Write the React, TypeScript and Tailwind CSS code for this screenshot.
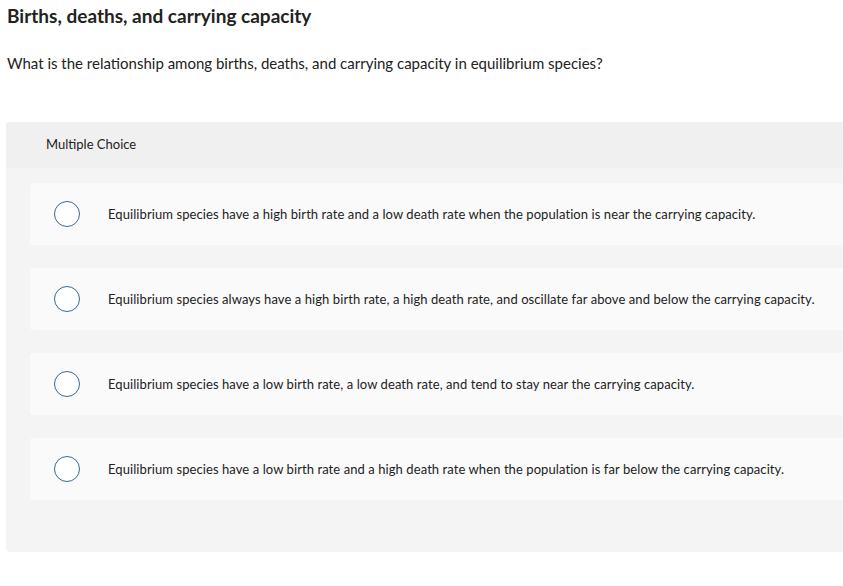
import React from 'react'

const options = [
  'Equilibrium species have a high birth rate and a low death rate when the population is near the carrying capacity.',
  'Equilibrium species always have a high birth rate, a high death rate, and oscillate far above and below the carrying capacity.',
  'Equilibrium species have a low birth rate, a low death rate, and tend to stay near the carrying capacity.',
  'Equilibrium species have a low birth rate and a high death rate when the population is far below the carrying capacity.',
]

const App = () => {
  return (
    <div className="w-[843px] h-[586px] overflow-hidden bg-white text-[#222] font-['Lato',sans-serif]">
      <h1 className="pl-[7px] pt-[4px] text-[19px] font-bold leading-[24px]">
        Births, deaths, and carrying capacity
      </h1>
      <p className="pl-[7px] mt-[25px] text-[15px] leading-[20px]">
        What is the relationship among births, deaths, and carrying capacity in equilibrium species?
      </p>

      {/* Question panel */}
      <div className="ml-[6px] mt-[49px] w-[850px] bg-[#f4f4f4] rounded-[4px] pb-[52px]">
        <div className="h-[46px] bg-[#f0f0f0] rounded-t-[4px] pl-[40px] flex items-center text-[13px]">
          Multiple Choice
        </div>
        <div className="pl-[24px] pt-[15px] flex flex-col gap-[23px]">
          {options.map((text) => (
            <div
              key={text}
              className="h-[62px] bg-[#fafafa] rounded-[3px] flex items-center pl-[24px]"
            >
              <span className="w-[26px] h-[26px] rounded-full border-[1.5px] border-[#3a6897] bg-white shrink-0" />
              <span className="ml-[28px] mt-[2px] text-[13px] tracking-[0.08px]">{text}</span>
            </div>
          ))}
        </div>
      </div>
    </div>
  )
}

export default App
